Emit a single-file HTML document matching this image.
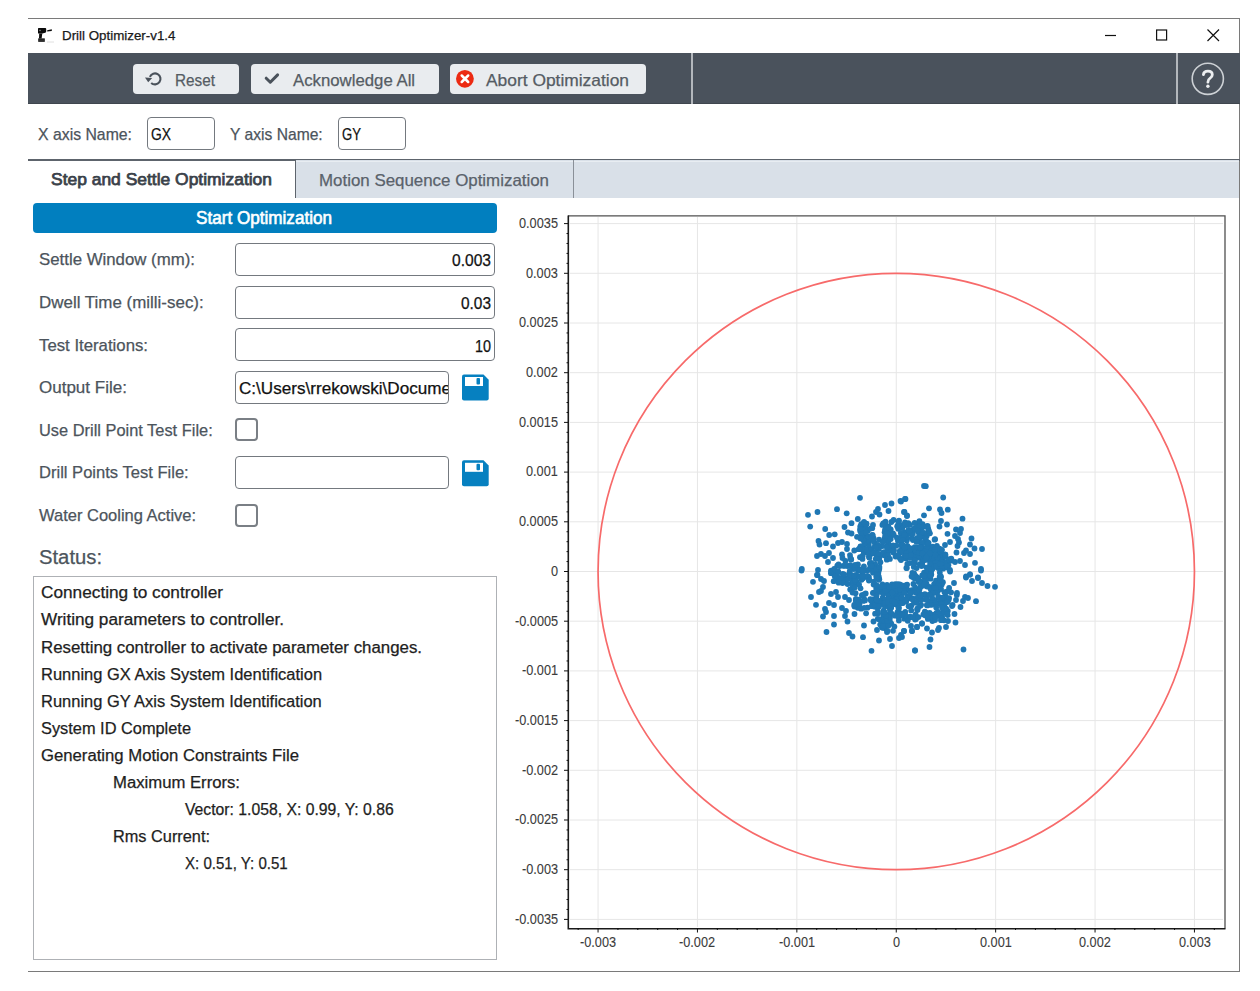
<!DOCTYPE html>
<html><head><meta charset="utf-8"><style>
html,body{margin:0;padding:0;width:1260px;height:991px;overflow:hidden;background:#fff;font-family:"Liberation Sans", sans-serif;}
.t{position:absolute;white-space:nowrap;line-height:0;transform-origin:0 0;-webkit-text-stroke:0.25px currentColor;}
.a{position:absolute;box-sizing:border-box;}
</style></head><body>
<!-- window frame -->
<div class="a" style="left:28px;top:18px;width:1212px;height:954px;border:1px solid #7a7a7a;border-left:none;"></div>
<!-- toolbar -->
<div class="a" style="left:28px;top:53px;width:1212px;height:51px;background:#4a525c;"></div>
<div class="a" style="left:28px;top:102.5px;width:1212px;height:1.5px;background:#3f464e;"></div>
<div class="a" style="left:690.5px;top:53px;width:2px;height:51px;background:#b3b7bc;"></div>
<div class="a" style="left:1176px;top:53px;width:2px;height:51px;background:#b3b7bc;"></div>
<div class="a" style="left:133px;top:64px;width:106px;height:30px;background:#e9ecef;border-radius:4px;"></div>
<div class="a" style="left:251px;top:64px;width:188px;height:30px;background:#e9ecef;border-radius:4px;"></div>
<div class="a" style="left:450px;top:64px;width:196px;height:30px;background:#e9ecef;border-radius:4px;"></div>
<!-- axis name inputs -->
<div class="a" style="left:147px;top:117px;width:68px;height:33px;border:1px solid #74797f;border-radius:4px;background:#fff;"></div>
<div class="a" style="left:338px;top:117px;width:68px;height:33px;border:1px solid #74797f;border-radius:4px;background:#fff;"></div>
<!-- tabs -->
<div class="a" style="left:28px;top:159px;width:1212px;height:1.5px;background:#5d646c;"></div>
<div class="a" style="left:296px;top:160px;width:943px;height:38px;background:#d9e0e8;"></div>
<div class="a" style="left:296px;top:160.5px;width:943px;height:1px;background:#e8edf2;"></div>
<div class="a" style="left:295px;top:160px;width:1.2px;height:38px;background:#5d646c;"></div>
<div class="a" style="left:573px;top:160px;width:1.2px;height:38px;background:#8a9098;"></div>
<!-- start button -->
<div class="a" style="left:32.5px;top:202.5px;width:464px;height:30px;background:#017fbf;border-radius:4px;"></div>
<!-- inputs -->
<div class="a" style="left:235px;top:242.5px;width:259.5px;height:33px;border:1px solid #74797f;border-radius:4px;"></div>
<div class="a" style="left:235px;top:285.5px;width:259.5px;height:33px;border:1px solid #74797f;border-radius:4px;"></div>
<div class="a" style="left:235px;top:328px;width:259.5px;height:33px;border:1px solid #74797f;border-radius:4px;"></div>
<div class="a" style="left:235px;top:370.5px;width:214px;height:33px;border:1px solid #74797f;border-radius:4px;overflow:hidden;">
  <div class="t" style="left:3px;top:16.58px;font-size:16.5px;color:#111;transform:scaleX(1.0369);">C:\Users\rrekowski\Documents\DrillOptimizer</div>
</div>
<div class="a" style="left:235px;top:418.3px;width:23px;height:23px;border:2px solid #7a7f85;border-radius:4px;"></div>
<div class="a" style="left:235px;top:456px;width:214px;height:33px;border:1px solid #74797f;border-radius:4px;"></div>
<div class="a" style="left:235px;top:503.8px;width:23px;height:23px;border:2px solid #7a7f85;border-radius:4px;"></div>
<!-- status box -->
<div class="a" style="left:33px;top:576px;width:464px;height:384px;border:1px solid #aeb1b5;"></div>
<svg class="a" style="left:0;top:0" width="1260" height="991">
  <!-- title icon -->
  <g fill="#0a0a0a">
    <path d="M38.6 28 L45.3 28 Q46.2 28 46.2 29 L46.2 31.6 Q46.2 32.4 45.2 32.8 L42.4 33.6 L38.6 33.6 Q38 33.6 38 33 L38 28.6 Q38 28 38.6 28 Z"/>
    <path d="M47.2 30.2 L51.8 29.2 L51.8 31 L47.2 31.6 Z"/>
    <path d="M39.2 33.4 L42.3 33.4 L41.6 38.4 L39 38.4 Z"/>
    <rect x="38.2" y="38.4" width="6.6" height="3.4"/>
  </g>
  <rect x="39.2" y="29.8" width="1.6" height="1.3" fill="#777"/>
  <rect x="38.2" y="39.7" width="6.6" height="0.7" fill="#666"/>
  <line x1="47" y1="42" x2="54" y2="42" stroke="#e0e0e0" stroke-width="1"/>
  <!-- window controls -->
  <line x1="1105" y1="35.5" x2="1116" y2="35.5" stroke="#111" stroke-width="1.2"/>
  <rect x="1156.6" y="30" width="10" height="10" fill="none" stroke="#111" stroke-width="1.2"/>
  <path d="M1207.5 29.5 L1219 41 M1219 29.5 L1207.5 41" stroke="#111" stroke-width="1.2"/>
  <!-- help -->
  <circle cx="1207.8" cy="78.8" r="15.6" fill="none" stroke="#cdd1d5" stroke-width="1.6"/>
  <path d="M1203.4 74.6 Q1203.8 71.2 1207.9 71.2 Q1212.3 71.2 1212.3 74.8 Q1212.3 77 1209.9 78.4 Q1207.9 79.6 1207.9 82.2" fill="none" stroke="#eceef0" stroke-width="2.8" stroke-linecap="round"/>
  <circle cx="1207.9" cy="86.2" r="1.7" fill="#eceef0"/>
  <!-- reset icon -->
  <path d="M151.2 82.9 A 5.5 5.5 0 1 0 149.9 76.8" fill="none" stroke="#4a525b" stroke-width="2.1"/>
  <path d="M145.0 77.6 L152.2 78.0 L148.2 82.3 Z" fill="#4a525b"/>
  <!-- check icon -->
  <path d="M266.2 78.2 L270.3 82.2 L277.6 74.9" fill="none" stroke="#4a525b" stroke-width="3" stroke-linecap="round" stroke-linejoin="round"/>
  <!-- red x -->
  <circle cx="464.9" cy="78.8" r="8.9" fill="#ec2a12"/>
  <path d="M461.7 75.5 L468.2 82 M468.2 75.5 L461.7 82" stroke="#fff" stroke-width="2.5" stroke-linecap="round"/>
  <!-- save icons -->
  <g id="sv">
    <path d="M462 376.5 Q462 374.5 464 374.5 L483.5 374.5 L488.7 379.7 L488.7 398.5 Q488.7 400.5 486.7 400.5 L464 400.5 Q462 400.5 462 398.5 Z" fill="#0680c0"/>
    <rect x="465" y="377" width="18" height="9" fill="#fff"/>
    <rect x="476.5" y="378" width="3.5" height="6.5" rx="1" fill="#0680c0"/>
  </g>
  <use href="#sv" x="0" y="85.8"/>
  <!-- chart grid -->
  <g stroke="#e6e6e6" stroke-width="1"><line x1="598.05" y1="217" x2="598.05" y2="927" /><line x1="697.45" y1="217" x2="697.45" y2="927" /><line x1="796.85" y1="217" x2="796.85" y2="927" /><line x1="896.25" y1="217" x2="896.25" y2="927" /><line x1="995.65" y1="217" x2="995.65" y2="927" /><line x1="1095.05" y1="217" x2="1095.05" y2="927" /><line x1="1194.45" y1="217" x2="1194.45" y2="927" /><line x1="570" y1="223.60" x2="1223" y2="223.60" /><line x1="570" y1="273.30" x2="1223" y2="273.30" /><line x1="570" y1="323.00" x2="1223" y2="323.00" /><line x1="570" y1="372.70" x2="1223" y2="372.70" /><line x1="570" y1="422.40" x2="1223" y2="422.40" /><line x1="570" y1="472.10" x2="1223" y2="472.10" /><line x1="570" y1="521.80" x2="1223" y2="521.80" /><line x1="570" y1="571.50" x2="1223" y2="571.50" /><line x1="570" y1="621.20" x2="1223" y2="621.20" /><line x1="570" y1="670.90" x2="1223" y2="670.90" /><line x1="570" y1="720.60" x2="1223" y2="720.60" /><line x1="570" y1="770.30" x2="1223" y2="770.30" /><line x1="570" y1="820.00" x2="1223" y2="820.00" /><line x1="570" y1="869.70" x2="1223" y2="869.70" /><line x1="570" y1="919.40" x2="1223" y2="919.40" /></g>
  <!-- circle -->
  <circle cx="896.25" cy="571.5" r="298.20" fill="none" stroke="#f76a6a" stroke-width="1.7"/>
  <!-- scatter -->
  <g fill="#1f77b4"><circle cx="906.5" cy="589.5" r="2.9"/><circle cx="936.9" cy="545.9" r="2.9"/><circle cx="889.1" cy="614.5" r="2.9"/><circle cx="889.9" cy="591.0" r="2.9"/><circle cx="940.8" cy="577.3" r="2.9"/><circle cx="924.4" cy="594.9" r="2.9"/><circle cx="904.8" cy="550.9" r="2.9"/><circle cx="889.5" cy="600.5" r="2.9"/><circle cx="942.2" cy="600.0" r="2.9"/><circle cx="947.7" cy="562.0" r="2.9"/><circle cx="932.1" cy="567.9" r="2.9"/><circle cx="884.7" cy="589.6" r="2.9"/><circle cx="873.6" cy="584.6" r="2.9"/><circle cx="945.5" cy="596.2" r="2.9"/><circle cx="956.8" cy="594.9" r="2.9"/><circle cx="902.0" cy="599.9" r="2.9"/><circle cx="902.6" cy="548.9" r="2.9"/><circle cx="932.1" cy="563.8" r="2.9"/><circle cx="927.9" cy="618.9" r="2.9"/><circle cx="881.0" cy="587.6" r="2.9"/><circle cx="940.8" cy="552.3" r="2.9"/><circle cx="877.1" cy="569.8" r="2.9"/><circle cx="895.6" cy="591.6" r="2.9"/><circle cx="921.6" cy="543.3" r="2.9"/><circle cx="908.1" cy="590.2" r="2.9"/><circle cx="888.6" cy="595.8" r="2.9"/><circle cx="873.8" cy="599.1" r="2.9"/><circle cx="860.6" cy="569.3" r="2.9"/><circle cx="905.0" cy="553.1" r="2.9"/><circle cx="875.3" cy="552.2" r="2.9"/><circle cx="877.0" cy="606.9" r="2.9"/><circle cx="923.6" cy="551.9" r="2.9"/><circle cx="852.4" cy="566.8" r="2.9"/><circle cx="918.7" cy="527.1" r="2.9"/><circle cx="869.9" cy="554.7" r="2.9"/><circle cx="885.0" cy="616.8" r="2.9"/><circle cx="850.0" cy="555.1" r="2.9"/><circle cx="943.0" cy="568.7" r="2.9"/><circle cx="896.9" cy="537.7" r="2.9"/><circle cx="932.9" cy="614.8" r="2.9"/><circle cx="932.9" cy="591.4" r="2.9"/><circle cx="932.8" cy="556.1" r="2.9"/><circle cx="931.2" cy="547.3" r="2.9"/><circle cx="873.0" cy="564.6" r="2.9"/><circle cx="884.5" cy="628.1" r="2.9"/><circle cx="924.9" cy="614.6" r="2.9"/><circle cx="914.2" cy="576.8" r="2.9"/><circle cx="945.5" cy="597.6" r="2.9"/><circle cx="914.2" cy="577.5" r="2.9"/><circle cx="881.8" cy="626.7" r="2.9"/><circle cx="907.6" cy="555.6" r="2.9"/><circle cx="890.0" cy="608.1" r="2.9"/><circle cx="873.7" cy="538.5" r="2.9"/><circle cx="897.5" cy="612.2" r="2.9"/><circle cx="947.8" cy="610.9" r="2.9"/><circle cx="909.7" cy="617.6" r="2.9"/><circle cx="862.9" cy="577.7" r="2.9"/><circle cx="889.5" cy="607.4" r="2.9"/><circle cx="893.3" cy="552.6" r="2.9"/><circle cx="868.9" cy="556.8" r="2.9"/><circle cx="904.3" cy="557.9" r="2.9"/><circle cx="900.2" cy="600.2" r="2.9"/><circle cx="851.2" cy="559.4" r="2.9"/><circle cx="929.7" cy="560.3" r="2.9"/><circle cx="932.2" cy="589.1" r="2.9"/><circle cx="892.5" cy="598.6" r="2.9"/><circle cx="882.7" cy="597.6" r="2.9"/><circle cx="887.9" cy="544.2" r="2.9"/><circle cx="897.7" cy="597.7" r="2.9"/><circle cx="837.3" cy="565.6" r="2.9"/><circle cx="883.4" cy="619.7" r="2.9"/><circle cx="949.7" cy="559.5" r="2.9"/><circle cx="944.7" cy="609.1" r="2.9"/><circle cx="862.1" cy="570.2" r="2.9"/><circle cx="931.0" cy="594.4" r="2.9"/><circle cx="923.4" cy="582.1" r="2.9"/><circle cx="915.6" cy="614.5" r="2.9"/><circle cx="927.8" cy="575.8" r="2.9"/><circle cx="921.0" cy="527.7" r="2.9"/><circle cx="901.3" cy="613.5" r="2.9"/><circle cx="860.5" cy="588.3" r="2.9"/><circle cx="879.2" cy="558.7" r="2.9"/><circle cx="879.6" cy="556.7" r="2.9"/><circle cx="882.4" cy="524.9" r="2.9"/><circle cx="893.0" cy="630.8" r="2.9"/><circle cx="881.7" cy="603.9" r="2.9"/><circle cx="926.3" cy="595.2" r="2.9"/><circle cx="921.5" cy="537.1" r="2.9"/><circle cx="862.8" cy="538.7" r="2.9"/><circle cx="868.9" cy="542.6" r="2.9"/><circle cx="919.7" cy="564.2" r="2.9"/><circle cx="939.0" cy="584.6" r="2.9"/><circle cx="850.4" cy="557.9" r="2.9"/><circle cx="928.6" cy="532.1" r="2.9"/><circle cx="936.5" cy="612.8" r="2.9"/><circle cx="880.0" cy="602.3" r="2.9"/><circle cx="921.3" cy="595.4" r="2.9"/><circle cx="940.5" cy="552.3" r="2.9"/><circle cx="883.0" cy="601.7" r="2.9"/><circle cx="936.4" cy="549.7" r="2.9"/><circle cx="874.4" cy="584.1" r="2.9"/><circle cx="855.3" cy="584.6" r="2.9"/><circle cx="878.8" cy="579.8" r="2.9"/><circle cx="914.5" cy="528.4" r="2.9"/><circle cx="876.6" cy="606.9" r="2.9"/><circle cx="926.5" cy="550.2" r="2.9"/><circle cx="915.9" cy="592.8" r="2.9"/><circle cx="932.8" cy="546.6" r="2.9"/><circle cx="915.5" cy="578.8" r="2.9"/><circle cx="842.7" cy="573.8" r="2.9"/><circle cx="873.8" cy="600.5" r="2.9"/><circle cx="901.6" cy="536.7" r="2.9"/><circle cx="911.9" cy="590.1" r="2.9"/><circle cx="913.2" cy="529.7" r="2.9"/><circle cx="871.1" cy="600.7" r="2.9"/><circle cx="900.1" cy="592.1" r="2.9"/><circle cx="887.5" cy="552.2" r="2.9"/><circle cx="921.1" cy="604.8" r="2.9"/><circle cx="898.6" cy="603.0" r="2.9"/><circle cx="874.7" cy="546.6" r="2.9"/><circle cx="877.8" cy="618.8" r="2.9"/><circle cx="928.0" cy="557.1" r="2.9"/><circle cx="871.3" cy="563.0" r="2.9"/><circle cx="898.4" cy="606.8" r="2.9"/><circle cx="929.3" cy="601.5" r="2.9"/><circle cx="882.2" cy="603.5" r="2.9"/><circle cx="934.0" cy="604.1" r="2.9"/><circle cx="904.9" cy="532.4" r="2.9"/><circle cx="932.4" cy="621.1" r="2.9"/><circle cx="951.4" cy="560.6" r="2.9"/><circle cx="899.8" cy="584.4" r="2.9"/><circle cx="917.3" cy="550.6" r="2.9"/><circle cx="939.8" cy="572.6" r="2.9"/><circle cx="906.2" cy="601.5" r="2.9"/><circle cx="914.1" cy="573.5" r="2.9"/><circle cx="893.1" cy="591.9" r="2.9"/><circle cx="874.8" cy="542.8" r="2.9"/><circle cx="838.1" cy="579.1" r="2.9"/><circle cx="918.3" cy="531.0" r="2.9"/><circle cx="939.6" cy="586.5" r="2.9"/><circle cx="948.5" cy="600.2" r="2.9"/><circle cx="924.2" cy="555.9" r="2.9"/><circle cx="940.0" cy="567.0" r="2.9"/><circle cx="926.4" cy="572.7" r="2.9"/><circle cx="848.9" cy="574.2" r="2.9"/><circle cx="912.4" cy="551.3" r="2.9"/><circle cx="888.4" cy="605.1" r="2.9"/><circle cx="944.9" cy="600.6" r="2.9"/><circle cx="875.7" cy="559.1" r="2.9"/><circle cx="896.8" cy="586.0" r="2.9"/><circle cx="887.8" cy="538.2" r="2.9"/><circle cx="849.9" cy="573.3" r="2.9"/><circle cx="919.4" cy="521.1" r="2.9"/><circle cx="880.4" cy="562.2" r="2.9"/><circle cx="889.7" cy="534.6" r="2.9"/><circle cx="908.9" cy="556.2" r="2.9"/><circle cx="922.6" cy="547.7" r="2.9"/><circle cx="930.4" cy="570.4" r="2.9"/><circle cx="860.5" cy="546.6" r="2.9"/><circle cx="909.8" cy="556.0" r="2.9"/><circle cx="890.0" cy="610.6" r="2.9"/><circle cx="878.7" cy="554.8" r="2.9"/><circle cx="923.4" cy="614.4" r="2.9"/><circle cx="875.2" cy="564.4" r="2.9"/><circle cx="857.8" cy="607.8" r="2.9"/><circle cx="863.0" cy="535.2" r="2.9"/><circle cx="906.7" cy="599.6" r="2.9"/><circle cx="878.3" cy="573.0" r="2.9"/><circle cx="831.0" cy="570.6" r="2.9"/><circle cx="926.6" cy="595.6" r="2.9"/><circle cx="937.7" cy="591.4" r="2.9"/><circle cx="942.2" cy="618.8" r="2.9"/><circle cx="886.5" cy="621.7" r="2.9"/><circle cx="923.3" cy="554.7" r="2.9"/><circle cx="856.6" cy="581.9" r="2.9"/><circle cx="929.5" cy="586.9" r="2.9"/><circle cx="930.5" cy="578.7" r="2.9"/><circle cx="888.5" cy="541.5" r="2.9"/><circle cx="935.8" cy="588.2" r="2.9"/><circle cx="911.4" cy="605.6" r="2.9"/><circle cx="941.3" cy="556.2" r="2.9"/><circle cx="906.4" cy="568.0" r="2.9"/><circle cx="905.3" cy="612.0" r="2.9"/><circle cx="854.8" cy="579.2" r="2.9"/><circle cx="922.6" cy="524.2" r="2.9"/><circle cx="873.0" cy="572.7" r="2.9"/><circle cx="837.3" cy="580.8" r="2.9"/><circle cx="883.0" cy="592.2" r="2.9"/><circle cx="906.8" cy="540.5" r="2.9"/><circle cx="871.6" cy="566.3" r="2.9"/><circle cx="882.4" cy="627.8" r="2.9"/><circle cx="890.9" cy="607.0" r="2.9"/><circle cx="866.3" cy="576.8" r="2.9"/><circle cx="863.9" cy="566.5" r="2.9"/><circle cx="872.8" cy="603.3" r="2.9"/><circle cx="865.3" cy="527.3" r="2.9"/><circle cx="868.6" cy="570.1" r="2.9"/><circle cx="888.2" cy="620.5" r="2.9"/><circle cx="932.9" cy="550.4" r="2.9"/><circle cx="845.1" cy="578.2" r="2.9"/><circle cx="854.5" cy="606.6" r="2.9"/><circle cx="884.2" cy="555.3" r="2.9"/><circle cx="868.5" cy="544.4" r="2.9"/><circle cx="882.4" cy="546.0" r="2.9"/><circle cx="909.6" cy="595.4" r="2.9"/><circle cx="946.6" cy="611.2" r="2.9"/><circle cx="860.2" cy="531.1" r="2.9"/><circle cx="930.6" cy="575.6" r="2.9"/><circle cx="936.0" cy="580.7" r="2.9"/><circle cx="933.8" cy="586.7" r="2.9"/><circle cx="873.7" cy="569.1" r="2.9"/><circle cx="932.4" cy="568.8" r="2.9"/><circle cx="868.9" cy="577.1" r="2.9"/><circle cx="938.6" cy="613.5" r="2.9"/><circle cx="949.1" cy="587.9" r="2.9"/><circle cx="864.4" cy="599.4" r="2.9"/><circle cx="876.3" cy="576.3" r="2.9"/><circle cx="911.7" cy="538.2" r="2.9"/><circle cx="877.8" cy="613.6" r="2.9"/><circle cx="869.1" cy="547.2" r="2.9"/><circle cx="879.0" cy="548.6" r="2.9"/><circle cx="838.3" cy="577.6" r="2.9"/><circle cx="937.0" cy="590.1" r="2.9"/><circle cx="890.8" cy="546.9" r="2.9"/><circle cx="899.0" cy="520.6" r="2.9"/><circle cx="915.7" cy="592.0" r="2.9"/><circle cx="926.7" cy="536.0" r="2.9"/><circle cx="860.0" cy="557.2" r="2.9"/><circle cx="891.1" cy="598.7" r="2.9"/><circle cx="872.9" cy="604.0" r="2.9"/><circle cx="897.5" cy="614.1" r="2.9"/><circle cx="854.1" cy="585.7" r="2.9"/><circle cx="917.1" cy="577.5" r="2.9"/><circle cx="927.6" cy="526.0" r="2.9"/><circle cx="869.4" cy="557.7" r="2.9"/><circle cx="940.1" cy="614.4" r="2.9"/><circle cx="863.1" cy="529.7" r="2.9"/><circle cx="923.2" cy="555.6" r="2.9"/><circle cx="911.9" cy="548.6" r="2.9"/><circle cx="908.3" cy="523.2" r="2.9"/><circle cx="883.3" cy="615.9" r="2.9"/><circle cx="939.1" cy="560.7" r="2.9"/><circle cx="855.9" cy="580.3" r="2.9"/><circle cx="884.0" cy="618.2" r="2.9"/><circle cx="920.5" cy="558.0" r="2.9"/><circle cx="876.4" cy="592.6" r="2.9"/><circle cx="941.8" cy="584.5" r="2.9"/><circle cx="876.2" cy="588.1" r="2.9"/><circle cx="897.5" cy="602.8" r="2.9"/><circle cx="935.7" cy="614.7" r="2.9"/><circle cx="946.7" cy="567.5" r="2.9"/><circle cx="916.7" cy="529.4" r="2.9"/><circle cx="942.4" cy="560.0" r="2.9"/><circle cx="889.8" cy="620.9" r="2.9"/><circle cx="865.3" cy="537.6" r="2.9"/><circle cx="905.9" cy="525.1" r="2.9"/><circle cx="878.5" cy="575.9" r="2.9"/><circle cx="884.2" cy="589.8" r="2.9"/><circle cx="913.8" cy="566.9" r="2.9"/><circle cx="917.9" cy="524.9" r="2.9"/><circle cx="885.4" cy="604.7" r="2.9"/><circle cx="882.9" cy="621.4" r="2.9"/><circle cx="935.4" cy="554.5" r="2.9"/><circle cx="882.4" cy="584.4" r="2.9"/><circle cx="902.6" cy="525.1" r="2.9"/><circle cx="858.2" cy="570.8" r="2.9"/><circle cx="939.5" cy="579.1" r="2.9"/><circle cx="914.0" cy="577.9" r="2.9"/><circle cx="854.3" cy="550.5" r="2.9"/><circle cx="845.3" cy="578.3" r="2.9"/><circle cx="874.1" cy="606.5" r="2.9"/><circle cx="939.5" cy="602.8" r="2.9"/><circle cx="884.3" cy="552.1" r="2.9"/><circle cx="946.8" cy="562.3" r="2.9"/><circle cx="938.7" cy="614.1" r="2.9"/><circle cx="860.6" cy="546.3" r="2.9"/><circle cx="872.2" cy="528.2" r="2.9"/><circle cx="856.7" cy="567.6" r="2.9"/><circle cx="901.4" cy="544.2" r="2.9"/><circle cx="919.0" cy="540.6" r="2.9"/><circle cx="915.2" cy="587.5" r="2.9"/><circle cx="879.3" cy="579.2" r="2.9"/><circle cx="905.7" cy="589.7" r="2.9"/><circle cx="885.5" cy="521.7" r="2.9"/><circle cx="930.3" cy="617.3" r="2.9"/><circle cx="917.1" cy="541.4" r="2.9"/><circle cx="890.8" cy="536.3" r="2.9"/><circle cx="921.2" cy="555.3" r="2.9"/><circle cx="923.2" cy="584.4" r="2.9"/><circle cx="842.0" cy="577.8" r="2.9"/><circle cx="940.2" cy="568.2" r="2.9"/><circle cx="892.0" cy="584.4" r="2.9"/><circle cx="935.1" cy="539.2" r="2.9"/><circle cx="899.8" cy="551.0" r="2.9"/><circle cx="944.0" cy="620.3" r="2.9"/><circle cx="936.7" cy="604.0" r="2.9"/><circle cx="916.2" cy="602.5" r="2.9"/><circle cx="873.6" cy="572.0" r="2.9"/><circle cx="901.7" cy="544.7" r="2.9"/><circle cx="918.7" cy="581.9" r="2.9"/><circle cx="900.0" cy="553.0" r="2.9"/><circle cx="922.2" cy="535.5" r="2.9"/><circle cx="890.7" cy="539.0" r="2.9"/><circle cx="893.7" cy="534.9" r="2.9"/><circle cx="841.1" cy="579.0" r="2.9"/><circle cx="940.9" cy="576.3" r="2.9"/><circle cx="863.9" cy="552.4" r="2.9"/><circle cx="852.2" cy="583.0" r="2.9"/><circle cx="925.6" cy="541.8" r="2.9"/><circle cx="887.4" cy="631.0" r="2.9"/><circle cx="914.7" cy="547.1" r="2.9"/><circle cx="941.1" cy="603.6" r="2.9"/><circle cx="893.5" cy="596.8" r="2.9"/><circle cx="883.6" cy="610.7" r="2.9"/><circle cx="861.5" cy="579.8" r="2.9"/><circle cx="855.5" cy="605.2" r="2.9"/><circle cx="922.6" cy="559.3" r="2.9"/><circle cx="833.7" cy="581.2" r="2.9"/><circle cx="924.1" cy="572.7" r="2.9"/><circle cx="924.0" cy="532.8" r="2.9"/><circle cx="898.7" cy="594.6" r="2.9"/><circle cx="906.5" cy="534.2" r="2.9"/><circle cx="930.1" cy="561.5" r="2.9"/><circle cx="907.4" cy="546.3" r="2.9"/><circle cx="932.3" cy="561.2" r="2.9"/><circle cx="932.7" cy="568.0" r="2.9"/><circle cx="914.8" cy="553.9" r="2.9"/><circle cx="857.2" cy="568.8" r="2.9"/><circle cx="932.0" cy="556.1" r="2.9"/><circle cx="857.9" cy="564.5" r="2.9"/><circle cx="905.7" cy="549.5" r="2.9"/><circle cx="872.1" cy="538.4" r="2.9"/><circle cx="902.0" cy="546.6" r="2.9"/><circle cx="927.0" cy="586.6" r="2.9"/><circle cx="914.1" cy="602.5" r="2.9"/><circle cx="931.3" cy="574.5" r="2.9"/><circle cx="903.7" cy="589.2" r="2.9"/><circle cx="885.0" cy="530.0" r="2.9"/><circle cx="843.9" cy="574.4" r="2.9"/><circle cx="915.8" cy="551.3" r="2.9"/><circle cx="889.4" cy="550.8" r="2.9"/><circle cx="867.7" cy="530.8" r="2.9"/><circle cx="924.8" cy="578.2" r="2.9"/><circle cx="928.0" cy="575.5" r="2.9"/><circle cx="910.0" cy="524.8" r="2.9"/><circle cx="915.6" cy="576.0" r="2.9"/><circle cx="948.4" cy="565.2" r="2.9"/><circle cx="920.4" cy="581.7" r="2.9"/><circle cx="878.8" cy="570.4" r="2.9"/><circle cx="889.5" cy="545.6" r="2.9"/><circle cx="874.5" cy="592.4" r="2.9"/><circle cx="859.1" cy="584.6" r="2.9"/><circle cx="893.2" cy="545.4" r="2.9"/><circle cx="942.9" cy="582.2" r="2.9"/><circle cx="872.2" cy="566.3" r="2.9"/><circle cx="925.6" cy="558.3" r="2.9"/><circle cx="922.3" cy="547.4" r="2.9"/><circle cx="853.6" cy="587.1" r="2.9"/><circle cx="922.6" cy="527.3" r="2.9"/><circle cx="927.6" cy="571.9" r="2.9"/><circle cx="877.2" cy="574.9" r="2.9"/><circle cx="884.3" cy="538.8" r="2.9"/><circle cx="879.4" cy="591.9" r="2.9"/><circle cx="932.0" cy="599.8" r="2.9"/><circle cx="884.6" cy="532.3" r="2.9"/><circle cx="882.9" cy="552.6" r="2.9"/><circle cx="885.6" cy="625.5" r="2.9"/><circle cx="864.6" cy="525.2" r="2.9"/><circle cx="945.1" cy="554.6" r="2.9"/><circle cx="867.4" cy="540.7" r="2.9"/><circle cx="894.0" cy="550.5" r="2.9"/><circle cx="925.9" cy="612.6" r="2.9"/><circle cx="843.1" cy="565.8" r="2.9"/><circle cx="862.5" cy="549.3" r="2.9"/><circle cx="944.8" cy="562.4" r="2.9"/><circle cx="872.9" cy="592.9" r="2.9"/><circle cx="860.6" cy="529.8" r="2.9"/><circle cx="872.7" cy="535.2" r="2.9"/><circle cx="870.6" cy="528.5" r="2.9"/><circle cx="869.2" cy="579.6" r="2.9"/><circle cx="871.4" cy="549.6" r="2.9"/><circle cx="891.2" cy="607.7" r="2.9"/><circle cx="884.9" cy="606.4" r="2.9"/><circle cx="890.7" cy="529.3" r="2.9"/><circle cx="895.0" cy="615.7" r="2.9"/><circle cx="876.8" cy="558.0" r="2.9"/><circle cx="889.4" cy="600.1" r="2.9"/><circle cx="861.9" cy="524.3" r="2.9"/><circle cx="937.1" cy="615.6" r="2.9"/><circle cx="886.7" cy="603.5" r="2.9"/><circle cx="916.0" cy="619.1" r="2.9"/><circle cx="899.3" cy="524.6" r="2.9"/><circle cx="894.4" cy="626.6" r="2.9"/><circle cx="855.9" cy="598.9" r="2.9"/><circle cx="908.6" cy="606.2" r="2.9"/><circle cx="852.9" cy="578.8" r="2.9"/><circle cx="938.1" cy="568.0" r="2.9"/><circle cx="895.9" cy="594.7" r="2.9"/><circle cx="932.0" cy="617.3" r="2.9"/><circle cx="944.9" cy="567.1" r="2.9"/><circle cx="878.7" cy="576.9" r="2.9"/><circle cx="918.8" cy="552.9" r="2.9"/><circle cx="871.7" cy="606.2" r="2.9"/><circle cx="866.5" cy="523.8" r="2.9"/><circle cx="922.9" cy="585.7" r="2.9"/><circle cx="884.0" cy="540.8" r="2.9"/><circle cx="906.1" cy="558.4" r="2.9"/><circle cx="951.1" cy="592.3" r="2.9"/><circle cx="887.6" cy="593.6" r="2.9"/><circle cx="906.2" cy="588.5" r="2.9"/><circle cx="891.9" cy="613.9" r="2.9"/><circle cx="837.5" cy="572.7" r="2.9"/><circle cx="885.6" cy="599.7" r="2.9"/><circle cx="845.3" cy="581.8" r="2.9"/><circle cx="865.7" cy="593.5" r="2.9"/><circle cx="869.5" cy="549.9" r="2.9"/><circle cx="939.7" cy="576.7" r="2.9"/><circle cx="899.9" cy="558.3" r="2.9"/><circle cx="897.8" cy="556.3" r="2.9"/><circle cx="938.7" cy="584.1" r="2.9"/><circle cx="859.0" cy="599.6" r="2.9"/><circle cx="934.4" cy="583.9" r="2.9"/><circle cx="847.4" cy="566.0" r="2.9"/><circle cx="919.3" cy="521.9" r="2.9"/><circle cx="947.7" cy="615.1" r="2.9"/><circle cx="949.1" cy="598.1" r="2.9"/><circle cx="879.5" cy="619.4" r="2.9"/><circle cx="926.8" cy="596.7" r="2.9"/><circle cx="862.5" cy="558.9" r="2.9"/><circle cx="915.1" cy="619.6" r="2.9"/><circle cx="918.5" cy="557.4" r="2.9"/><circle cx="894.0" cy="604.1" r="2.9"/><circle cx="933.9" cy="559.0" r="2.9"/><circle cx="912.3" cy="572.8" r="2.9"/><circle cx="853.4" cy="582.9" r="2.9"/><circle cx="904.3" cy="618.7" r="2.9"/><circle cx="935.6" cy="614.2" r="2.9"/><circle cx="879.0" cy="539.6" r="2.9"/><circle cx="912.9" cy="540.1" r="2.9"/><circle cx="926.4" cy="583.3" r="2.9"/><circle cx="935.4" cy="557.4" r="2.9"/><circle cx="914.1" cy="560.0" r="2.9"/><circle cx="911.6" cy="576.5" r="2.9"/><circle cx="943.1" cy="605.3" r="2.9"/><circle cx="864.2" cy="538.1" r="2.9"/><circle cx="934.9" cy="592.7" r="2.9"/><circle cx="855.8" cy="600.7" r="2.9"/><circle cx="876.5" cy="585.1" r="2.9"/><circle cx="886.3" cy="592.2" r="2.9"/><circle cx="842.5" cy="583.0" r="2.9"/><circle cx="913.4" cy="584.0" r="2.9"/><circle cx="931.0" cy="589.2" r="2.9"/><circle cx="904.0" cy="552.0" r="2.9"/><circle cx="908.5" cy="529.9" r="2.9"/><circle cx="896.3" cy="545.7" r="2.9"/><circle cx="889.5" cy="604.8" r="2.9"/><circle cx="878.0" cy="577.3" r="2.9"/><circle cx="927.3" cy="605.4" r="2.9"/><circle cx="891.4" cy="522.0" r="2.9"/><circle cx="882.8" cy="620.6" r="2.9"/><circle cx="909.2" cy="552.4" r="2.9"/><circle cx="933.9" cy="557.3" r="2.9"/><circle cx="944.6" cy="562.7" r="2.9"/><circle cx="928.2" cy="528.7" r="2.9"/><circle cx="898.7" cy="617.2" r="2.9"/><circle cx="904.7" cy="556.4" r="2.9"/><circle cx="926.5" cy="613.2" r="2.9"/><circle cx="903.3" cy="589.6" r="2.9"/><circle cx="869.9" cy="563.5" r="2.9"/><circle cx="887.2" cy="621.9" r="2.9"/><circle cx="934.6" cy="539.7" r="2.9"/><circle cx="930.1" cy="564.4" r="2.9"/><circle cx="919.4" cy="581.8" r="2.9"/><circle cx="885.8" cy="525.4" r="2.9"/><circle cx="893.0" cy="533.3" r="2.9"/><circle cx="941.0" cy="589.0" r="2.9"/><circle cx="934.9" cy="557.2" r="2.9"/><circle cx="942.1" cy="616.9" r="2.9"/><circle cx="936.9" cy="581.0" r="2.9"/><circle cx="941.8" cy="598.0" r="2.9"/><circle cx="860.5" cy="569.8" r="2.9"/><circle cx="902.9" cy="603.1" r="2.9"/><circle cx="862.8" cy="529.9" r="2.9"/><circle cx="943.7" cy="610.0" r="2.9"/><circle cx="881.1" cy="586.7" r="2.9"/><circle cx="882.5" cy="603.6" r="2.9"/><circle cx="889.1" cy="598.2" r="2.9"/><circle cx="905.0" cy="522.4" r="2.9"/><circle cx="910.1" cy="616.6" r="2.9"/><circle cx="934.9" cy="600.1" r="2.9"/><circle cx="878.0" cy="545.0" r="2.9"/><circle cx="924.2" cy="553.1" r="2.9"/><circle cx="909.6" cy="533.5" r="2.9"/><circle cx="896.4" cy="604.6" r="2.9"/><circle cx="916.7" cy="538.2" r="2.9"/><circle cx="895.3" cy="584.1" r="2.9"/><circle cx="888.3" cy="593.5" r="2.9"/><circle cx="946.2" cy="609.6" r="2.9"/><circle cx="919.4" cy="589.7" r="2.9"/><circle cx="876.4" cy="599.0" r="2.9"/><circle cx="930.7" cy="551.1" r="2.9"/><circle cx="920.5" cy="587.0" r="2.9"/><circle cx="907.3" cy="545.9" r="2.9"/><circle cx="888.4" cy="526.5" r="2.9"/><circle cx="877.3" cy="574.0" r="2.9"/><circle cx="920.4" cy="550.5" r="2.9"/><circle cx="923.8" cy="584.5" r="2.9"/><circle cx="905.0" cy="537.3" r="2.9"/><circle cx="833.5" cy="571.9" r="2.9"/><circle cx="895.6" cy="587.9" r="2.9"/><circle cx="929.9" cy="533.3" r="2.9"/><circle cx="851.0" cy="559.4" r="2.9"/><circle cx="873.8" cy="592.8" r="2.9"/><circle cx="931.1" cy="589.8" r="2.9"/><circle cx="909.3" cy="551.8" r="2.9"/><circle cx="911.3" cy="592.2" r="2.9"/><circle cx="925.7" cy="539.3" r="2.9"/><circle cx="934.3" cy="584.1" r="2.9"/><circle cx="926.5" cy="526.3" r="2.9"/><circle cx="870.0" cy="568.1" r="2.9"/><circle cx="889.9" cy="617.6" r="2.9"/><circle cx="936.7" cy="552.6" r="2.9"/><circle cx="944.0" cy="612.8" r="2.9"/><circle cx="876.5" cy="554.6" r="2.9"/><circle cx="885.5" cy="555.7" r="2.9"/><circle cx="900.1" cy="589.3" r="2.9"/><circle cx="901.3" cy="544.9" r="2.9"/><circle cx="850.2" cy="589.5" r="2.9"/><circle cx="902.4" cy="528.1" r="2.9"/><circle cx="931.0" cy="604.9" r="2.9"/><circle cx="834.2" cy="569.0" r="2.9"/><circle cx="945.2" cy="554.6" r="2.9"/><circle cx="867.4" cy="607.7" r="2.9"/><circle cx="939.6" cy="599.1" r="2.9"/><circle cx="901.6" cy="551.3" r="2.9"/><circle cx="915.9" cy="555.4" r="2.9"/><circle cx="936.4" cy="547.6" r="2.9"/><circle cx="885.7" cy="530.3" r="2.9"/><circle cx="897.9" cy="540.8" r="2.9"/><circle cx="868.4" cy="553.3" r="2.9"/><circle cx="838.5" cy="564.5" r="2.9"/><circle cx="939.1" cy="583.1" r="2.9"/><circle cx="939.6" cy="548.6" r="2.9"/><circle cx="906.2" cy="616.3" r="2.9"/><circle cx="886.9" cy="547.5" r="2.9"/><circle cx="909.0" cy="598.3" r="2.9"/><circle cx="877.0" cy="575.2" r="2.9"/><circle cx="945.6" cy="556.9" r="2.9"/><circle cx="927.5" cy="543.6" r="2.9"/><circle cx="873.1" cy="540.3" r="2.9"/><circle cx="859.4" cy="604.2" r="2.9"/><circle cx="907.7" cy="596.5" r="2.9"/><circle cx="888.1" cy="555.7" r="2.9"/><circle cx="952.6" cy="605.0" r="2.9"/><circle cx="903.0" cy="545.3" r="2.9"/><circle cx="927.0" cy="577.9" r="2.9"/><circle cx="866.1" cy="613.3" r="2.9"/><circle cx="912.8" cy="533.4" r="2.9"/><circle cx="876.5" cy="590.9" r="2.9"/><circle cx="830.9" cy="573.2" r="2.9"/><circle cx="883.3" cy="593.7" r="2.9"/><circle cx="935.4" cy="562.2" r="2.9"/><circle cx="906.4" cy="547.4" r="2.9"/><circle cx="887.1" cy="590.6" r="2.9"/><circle cx="834.8" cy="576.2" r="2.9"/><circle cx="935.1" cy="556.6" r="2.9"/><circle cx="873.6" cy="553.4" r="2.9"/><circle cx="856.2" cy="575.0" r="2.9"/><circle cx="918.5" cy="556.1" r="2.9"/><circle cx="946.1" cy="608.6" r="2.9"/><circle cx="900.2" cy="595.4" r="2.9"/><circle cx="912.9" cy="617.2" r="2.9"/><circle cx="939.3" cy="551.2" r="2.9"/><circle cx="855.0" cy="580.0" r="2.9"/><circle cx="938.3" cy="596.7" r="2.9"/><circle cx="897.6" cy="597.7" r="2.9"/><circle cx="909.3" cy="548.0" r="2.9"/><circle cx="852.8" cy="586.4" r="2.9"/><circle cx="918.6" cy="526.6" r="2.9"/><circle cx="941.8" cy="566.1" r="2.9"/><circle cx="885.2" cy="602.9" r="2.9"/><circle cx="906.8" cy="567.9" r="2.9"/><circle cx="866.1" cy="570.4" r="2.9"/><circle cx="876.6" cy="578.1" r="2.9"/><circle cx="904.4" cy="600.4" r="2.9"/><circle cx="938.2" cy="551.9" r="2.9"/><circle cx="909.3" cy="551.1" r="2.9"/><circle cx="925.4" cy="559.8" r="2.9"/><circle cx="906.3" cy="553.2" r="2.9"/><circle cx="936.2" cy="607.5" r="2.9"/><circle cx="854.2" cy="605.0" r="2.9"/><circle cx="929.5" cy="550.4" r="2.9"/><circle cx="930.3" cy="575.5" r="2.9"/><circle cx="889.4" cy="529.8" r="2.9"/><circle cx="912.8" cy="598.4" r="2.9"/><circle cx="944.5" cy="604.2" r="2.9"/><circle cx="845.4" cy="560.9" r="2.9"/><circle cx="920.4" cy="605.8" r="2.9"/><circle cx="946.9" cy="566.1" r="2.9"/><circle cx="904.7" cy="547.8" r="2.9"/><circle cx="860.3" cy="526.3" r="2.9"/><circle cx="895.1" cy="585.3" r="2.9"/><circle cx="861.2" cy="524.1" r="2.9"/><circle cx="910.2" cy="593.1" r="2.9"/><circle cx="945.4" cy="554.6" r="2.9"/><circle cx="909.7" cy="563.1" r="2.9"/><circle cx="924.9" cy="550.9" r="2.9"/><circle cx="864.1" cy="544.7" r="2.9"/><circle cx="887.3" cy="533.5" r="2.9"/><circle cx="905.0" cy="615.3" r="2.9"/><circle cx="911.2" cy="610.4" r="2.9"/><circle cx="922.2" cy="575.4" r="2.9"/><circle cx="898.2" cy="528.8" r="2.9"/><circle cx="854.7" cy="587.6" r="2.9"/><circle cx="912.5" cy="556.7" r="2.9"/><circle cx="858.9" cy="602.2" r="2.9"/><circle cx="942.1" cy="562.7" r="2.9"/><circle cx="924.8" cy="611.6" r="2.9"/><circle cx="876.8" cy="604.9" r="2.9"/><circle cx="914.6" cy="563.1" r="2.9"/><circle cx="925.7" cy="579.9" r="2.9"/><circle cx="892.5" cy="588.5" r="2.9"/><circle cx="866.4" cy="523.7" r="2.9"/><circle cx="863.4" cy="540.3" r="2.9"/><circle cx="929.7" cy="612.9" r="2.9"/><circle cx="936.5" cy="549.3" r="2.9"/><circle cx="852.5" cy="592.5" r="2.9"/><circle cx="947.3" cy="591.4" r="2.9"/><circle cx="918.9" cy="533.0" r="2.9"/><circle cx="896.2" cy="599.5" r="2.9"/><circle cx="862.3" cy="574.7" r="2.9"/><circle cx="870.3" cy="599.2" r="2.9"/><circle cx="917.5" cy="610.0" r="2.9"/><circle cx="934.3" cy="588.0" r="2.9"/><circle cx="940.6" cy="579.8" r="2.9"/><circle cx="889.3" cy="618.9" r="2.9"/><circle cx="917.1" cy="609.1" r="2.9"/><circle cx="848.6" cy="578.9" r="2.9"/><circle cx="831.4" cy="571.5" r="2.9"/><circle cx="875.1" cy="613.7" r="2.9"/><circle cx="895.0" cy="591.1" r="2.9"/><circle cx="834.7" cy="569.3" r="2.9"/><circle cx="917.6" cy="597.6" r="2.9"/><circle cx="859.5" cy="576.7" r="2.9"/><circle cx="863.0" cy="578.3" r="2.9"/><circle cx="850.6" cy="575.3" r="2.9"/><circle cx="891.3" cy="623.6" r="2.9"/><circle cx="854.2" cy="575.5" r="2.9"/><circle cx="853.8" cy="569.1" r="2.9"/><circle cx="886.8" cy="559.7" r="2.9"/><circle cx="868.4" cy="536.3" r="2.9"/><circle cx="938.3" cy="612.0" r="2.9"/><circle cx="873.7" cy="568.6" r="2.9"/><circle cx="898.6" cy="608.7" r="2.9"/><circle cx="867.5" cy="576.0" r="2.9"/><circle cx="937.3" cy="556.6" r="2.9"/><circle cx="909.4" cy="530.8" r="2.9"/><circle cx="887.0" cy="584.8" r="2.9"/><circle cx="878.5" cy="605.0" r="2.9"/><circle cx="938.0" cy="548.2" r="2.9"/><circle cx="926.9" cy="604.9" r="2.9"/><circle cx="905.5" cy="585.4" r="2.9"/><circle cx="901.8" cy="603.0" r="2.9"/><circle cx="917.8" cy="547.3" r="2.9"/><circle cx="912.5" cy="599.6" r="2.9"/><circle cx="888.1" cy="621.6" r="2.9"/><circle cx="868.9" cy="580.6" r="2.9"/><circle cx="906.4" cy="536.9" r="2.9"/><circle cx="914.9" cy="528.8" r="2.9"/><circle cx="918.4" cy="617.1" r="2.9"/><circle cx="893.6" cy="519.9" r="2.9"/><circle cx="865.6" cy="549.3" r="2.9"/><circle cx="874.8" cy="605.0" r="2.9"/><circle cx="949.1" cy="559.7" r="2.9"/><circle cx="916.8" cy="602.2" r="2.9"/><circle cx="922.2" cy="562.5" r="2.9"/><circle cx="913.3" cy="556.8" r="2.9"/><circle cx="914.6" cy="523.0" r="2.9"/><circle cx="917.9" cy="608.0" r="2.9"/><circle cx="938.4" cy="584.8" r="2.9"/><circle cx="944.5" cy="592.2" r="2.9"/><circle cx="871.4" cy="535.9" r="2.9"/><circle cx="861.9" cy="595.2" r="2.9"/><circle cx="861.6" cy="535.5" r="2.9"/><circle cx="920.4" cy="594.2" r="2.9"/><circle cx="926.5" cy="567.6" r="2.9"/><circle cx="924.9" cy="594.1" r="2.9"/><circle cx="872.3" cy="534.9" r="2.9"/><circle cx="877.1" cy="600.4" r="2.9"/><circle cx="925.6" cy="551.2" r="2.9"/><circle cx="898.4" cy="523.9" r="2.9"/><circle cx="927.8" cy="617.5" r="2.9"/><circle cx="865.9" cy="532.3" r="2.9"/><circle cx="932.9" cy="557.8" r="2.9"/><circle cx="928.6" cy="557.4" r="2.9"/><circle cx="870.8" cy="565.7" r="2.9"/><circle cx="919.0" cy="552.6" r="2.9"/><circle cx="931.3" cy="570.9" r="2.9"/><circle cx="887.9" cy="602.0" r="2.9"/><circle cx="938.3" cy="586.4" r="2.9"/><circle cx="934.8" cy="549.9" r="2.9"/><circle cx="905.5" cy="524.4" r="2.9"/><circle cx="878.8" cy="600.9" r="2.9"/><circle cx="861.1" cy="532.8" r="2.9"/><circle cx="907.7" cy="620.8" r="2.9"/><circle cx="897.8" cy="584.2" r="2.9"/><circle cx="947.5" cy="602.1" r="2.9"/><circle cx="861.7" cy="548.7" r="2.9"/><circle cx="916.5" cy="541.8" r="2.9"/><circle cx="932.6" cy="593.3" r="2.9"/><circle cx="847.6" cy="584.0" r="2.9"/><circle cx="839.6" cy="566.1" r="2.9"/><circle cx="931.0" cy="569.1" r="2.9"/><circle cx="922.5" cy="542.8" r="2.9"/><circle cx="885.1" cy="536.1" r="2.9"/><circle cx="892.5" cy="600.9" r="2.9"/><circle cx="928.9" cy="530.8" r="2.9"/><circle cx="934.5" cy="566.7" r="2.9"/><circle cx="932.1" cy="597.7" r="2.9"/><circle cx="876.6" cy="595.6" r="2.9"/><circle cx="941.0" cy="620.2" r="2.9"/><circle cx="885.2" cy="587.2" r="2.9"/><circle cx="913.8" cy="563.2" r="2.9"/><circle cx="880.2" cy="624.6" r="2.9"/><circle cx="889.3" cy="618.0" r="2.9"/><circle cx="858.7" cy="549.2" r="2.9"/><circle cx="875.9" cy="553.1" r="2.9"/><circle cx="916.6" cy="568.1" r="2.9"/><circle cx="942.2" cy="597.8" r="2.9"/><circle cx="936.2" cy="565.9" r="2.9"/><circle cx="879.3" cy="568.8" r="2.9"/><circle cx="907.3" cy="564.0" r="2.9"/><circle cx="849.8" cy="571.0" r="2.9"/><circle cx="920.1" cy="547.0" r="2.9"/><circle cx="862.5" cy="575.8" r="2.9"/><circle cx="876.6" cy="599.4" r="2.9"/><circle cx="927.4" cy="542.1" r="2.9"/><circle cx="929.5" cy="594.6" r="2.9"/><circle cx="898.6" cy="521.3" r="2.9"/><circle cx="904.4" cy="592.9" r="2.9"/><circle cx="905.2" cy="599.7" r="2.9"/><circle cx="925.7" cy="599.5" r="2.9"/><circle cx="921.2" cy="600.1" r="2.9"/><circle cx="885.4" cy="590.8" r="2.9"/><circle cx="889.9" cy="558.9" r="2.9"/><circle cx="922.3" cy="564.5" r="2.9"/><circle cx="940.7" cy="615.7" r="2.9"/><circle cx="940.9" cy="604.2" r="2.9"/><circle cx="850.4" cy="565.2" r="2.9"/><circle cx="937.3" cy="557.4" r="2.9"/><circle cx="902.4" cy="540.1" r="2.9"/><circle cx="935.2" cy="554.7" r="2.9"/><circle cx="885.8" cy="528.4" r="2.9"/><circle cx="879.0" cy="606.5" r="2.9"/><circle cx="875.5" cy="568.3" r="2.9"/><circle cx="864.2" cy="607.8" r="2.9"/><circle cx="862.7" cy="555.7" r="2.9"/><circle cx="882.8" cy="542.1" r="2.9"/><circle cx="861.1" cy="608.7" r="2.9"/><circle cx="927.3" cy="546.3" r="2.9"/><circle cx="898.9" cy="620.6" r="2.9"/><circle cx="895.6" cy="556.5" r="2.9"/><circle cx="943.9" cy="611.6" r="2.9"/><circle cx="925.1" cy="559.8" r="2.9"/><circle cx="918.5" cy="578.6" r="2.9"/><circle cx="838.7" cy="582.7" r="2.9"/><circle cx="863.1" cy="600.9" r="2.9"/><circle cx="886.1" cy="617.2" r="2.9"/><circle cx="920.4" cy="547.5" r="2.9"/><circle cx="886.0" cy="615.6" r="2.9"/><circle cx="921.8" cy="532.6" r="2.9"/><circle cx="901.8" cy="597.4" r="2.9"/><circle cx="863.2" cy="571.4" r="2.9"/><circle cx="887.9" cy="527.3" r="2.9"/><circle cx="876.0" cy="568.9" r="2.9"/><circle cx="876.1" cy="547.3" r="2.9"/><circle cx="951.3" cy="558.6" r="2.9"/><circle cx="873.9" cy="581.7" r="2.9"/><circle cx="859.4" cy="548.9" r="2.9"/><circle cx="894.7" cy="602.4" r="2.9"/><circle cx="864.0" cy="594.3" r="2.9"/><circle cx="865.0" cy="600.4" r="2.9"/><circle cx="888.3" cy="625.8" r="2.9"/><circle cx="879.4" cy="567.0" r="2.9"/><circle cx="897.5" cy="555.4" r="2.9"/><circle cx="883.0" cy="613.4" r="2.9"/><circle cx="927.7" cy="544.0" r="2.9"/><circle cx="935.7" cy="587.9" r="2.9"/><circle cx="921.6" cy="566.1" r="2.9"/><circle cx="884.5" cy="612.1" r="2.9"/><circle cx="864.1" cy="522.6" r="2.9"/><circle cx="844.8" cy="565.8" r="2.9"/><circle cx="928.6" cy="542.8" r="2.9"/><circle cx="882.8" cy="625.9" r="2.9"/><circle cx="941.0" cy="618.4" r="2.9"/><circle cx="900.8" cy="532.9" r="2.9"/><circle cx="838.2" cy="571.3" r="2.9"/><circle cx="907.1" cy="584.7" r="2.9"/><circle cx="922.3" cy="553.2" r="2.9"/><circle cx="917.7" cy="530.7" r="2.9"/><circle cx="855.1" cy="565.0" r="2.9"/><circle cx="929.7" cy="553.4" r="2.9"/><circle cx="889.2" cy="586.9" r="2.9"/><circle cx="860.1" cy="529.1" r="2.9"/><circle cx="920.7" cy="595.7" r="2.9"/><circle cx="855.6" cy="593.2" r="2.9"/><circle cx="919.4" cy="536.8" r="2.9"/><circle cx="920.2" cy="547.5" r="2.9"/><circle cx="924.4" cy="584.1" r="2.9"/><circle cx="909.9" cy="557.7" r="2.9"/><circle cx="914.9" cy="560.5" r="2.9"/><circle cx="878.0" cy="553.6" r="2.9"/><circle cx="865.9" cy="523.9" r="2.9"/><circle cx="926.3" cy="557.4" r="2.9"/><circle cx="884.5" cy="523.0" r="2.9"/><circle cx="925.1" cy="575.4" r="2.9"/><circle cx="938.2" cy="614.3" r="2.9"/><circle cx="935.1" cy="620.0" r="2.9"/><circle cx="877.9" cy="611.3" r="2.9"/><circle cx="892.4" cy="592.6" r="2.9"/><circle cx="902.0" cy="615.2" r="2.9"/><circle cx="935.5" cy="616.8" r="2.9"/><circle cx="883.3" cy="523.4" r="2.9"/><circle cx="940.4" cy="563.8" r="2.9"/><circle cx="898.9" cy="607.8" r="2.9"/><circle cx="904.4" cy="534.9" r="2.9"/><circle cx="897.2" cy="526.2" r="2.9"/><circle cx="944.3" cy="609.3" r="2.9"/><circle cx="871.3" cy="566.0" r="2.9"/><circle cx="924.0" cy="575.8" r="2.9"/><circle cx="910.7" cy="555.0" r="2.9"/><circle cx="902.0" cy="585.5" r="2.9"/><circle cx="860.0" cy="497.8" r="2.9"/><circle cx="808.0" cy="514.8" r="2.9"/><circle cx="817.5" cy="512.0" r="2.9"/><circle cx="837.0" cy="509.2" r="2.9"/><circle cx="846.7" cy="513.3" r="2.9"/><circle cx="810.2" cy="526.6" r="2.9"/><circle cx="825.2" cy="529.0" r="2.9"/><circle cx="829.2" cy="535.0" r="2.9"/><circle cx="834.7" cy="534.3" r="2.9"/><circle cx="857.8" cy="519.0" r="2.9"/><circle cx="851.5" cy="523.2" r="2.9"/><circle cx="844.5" cy="527.0" r="2.9"/><circle cx="848.0" cy="532.5" r="2.9"/><circle cx="851.5" cy="533.5" r="2.9"/><circle cx="857.0" cy="536.8" r="2.9"/><circle cx="860.5" cy="538.5" r="2.9"/><circle cx="818.5" cy="541.0" r="2.9"/><circle cx="819.5" cy="544.5" r="2.9"/><circle cx="826.0" cy="543.2" r="2.9"/><circle cx="833.0" cy="546.5" r="2.9"/><circle cx="838.0" cy="543.0" r="2.9"/><circle cx="842.0" cy="542.0" r="2.9"/><circle cx="847.0" cy="544.0" r="2.9"/><circle cx="847.0" cy="549.0" r="2.9"/><circle cx="817.0" cy="556.0" r="2.9"/><circle cx="821.0" cy="554.0" r="2.9"/><circle cx="825.0" cy="556.0" r="2.9"/><circle cx="829.0" cy="553.0" r="2.9"/><circle cx="828.0" cy="562.0" r="2.9"/><circle cx="833.0" cy="558.0" r="2.9"/><circle cx="842.0" cy="554.5" r="2.9"/><circle cx="842.5" cy="558.0" r="2.9"/><circle cx="801.8" cy="569.0" r="2.9"/><circle cx="818.0" cy="570.0" r="2.9"/><circle cx="817.5" cy="575.0" r="2.9"/><circle cx="900.5" cy="501.0" r="2.9"/><circle cx="905.5" cy="499.0" r="2.9"/><circle cx="904.0" cy="512.0" r="2.9"/><circle cx="907.0" cy="515.5" r="2.9"/><circle cx="924.0" cy="486.0" r="2.9"/><circle cx="878.0" cy="509.0" r="2.9"/><circle cx="876.0" cy="512.0" r="2.9"/><circle cx="879.5" cy="514.5" r="2.9"/><circle cx="885.0" cy="505.0" r="2.9"/><circle cx="891.5" cy="503.5" r="2.9"/><circle cx="888.5" cy="511.0" r="2.9"/><circle cx="872.0" cy="516.5" r="2.9"/><circle cx="873.0" cy="525.0" r="2.9"/><circle cx="864.0" cy="522.0" r="2.9"/><circle cx="925.8" cy="486.2" r="2.9"/><circle cx="943.2" cy="497.5" r="2.9"/><circle cx="905.0" cy="499.0" r="2.9"/><circle cx="901.0" cy="501.5" r="2.9"/><circle cx="929.0" cy="508.3" r="2.9"/><circle cx="924.0" cy="515.3" r="2.9"/><circle cx="940.0" cy="509.5" r="2.9"/><circle cx="941.5" cy="513.0" r="2.9"/><circle cx="947.8" cy="509.7" r="2.9"/><circle cx="962.5" cy="518.7" r="2.9"/><circle cx="904.5" cy="512.0" r="2.9"/><circle cx="907.0" cy="516.0" r="2.9"/><circle cx="941.0" cy="521.0" r="2.9"/><circle cx="939.5" cy="526.5" r="2.9"/><circle cx="947.0" cy="524.5" r="2.9"/><circle cx="947.5" cy="533.8" r="2.9"/><circle cx="956.0" cy="529.5" r="2.9"/><circle cx="961.0" cy="529.0" r="2.9"/><circle cx="960.0" cy="533.0" r="2.9"/><circle cx="955.0" cy="536.0" r="2.9"/><circle cx="958.0" cy="539.0" r="2.9"/><circle cx="959.0" cy="542.5" r="2.9"/><circle cx="957.5" cy="546.0" r="2.9"/><circle cx="950.0" cy="542.0" r="2.9"/><circle cx="945.0" cy="545.0" r="2.9"/><circle cx="942.0" cy="550.0" r="2.9"/><circle cx="971.5" cy="538.5" r="2.9"/><circle cx="970.0" cy="544.5" r="2.9"/><circle cx="974.5" cy="548.5" r="2.9"/><circle cx="982.0" cy="549.0" r="2.9"/><circle cx="966.0" cy="550.5" r="2.9"/><circle cx="964.0" cy="553.0" r="2.9"/><circle cx="970.0" cy="554.0" r="2.9"/><circle cx="956.5" cy="552.5" r="2.9"/><circle cx="955.0" cy="562.0" r="2.9"/><circle cx="960.0" cy="561.0" r="2.9"/><circle cx="965.0" cy="565.0" r="2.9"/><circle cx="975.0" cy="562.8" r="2.9"/><circle cx="981.0" cy="569.0" r="2.9"/><circle cx="950.0" cy="570.0" r="2.9"/><circle cx="966.0" cy="576.5" r="2.9"/><circle cx="970.0" cy="574.5" r="2.9"/><circle cx="978.0" cy="577.5" r="2.9"/><circle cx="906.0" cy="556.0" r="2.9"/><circle cx="901.0" cy="560.0" r="2.9"/><circle cx="801.5" cy="570.5" r="2.9"/><circle cx="813.0" cy="581.8" r="2.9"/><circle cx="811.0" cy="597.0" r="2.9"/><circle cx="816.0" cy="604.8" r="2.9"/><circle cx="817.0" cy="575.0" r="2.9"/><circle cx="821.0" cy="579.0" r="2.9"/><circle cx="824.0" cy="581.0" r="2.9"/><circle cx="823.0" cy="587.0" r="2.9"/><circle cx="821.0" cy="591.0" r="2.9"/><circle cx="819.0" cy="592.0" r="2.9"/><circle cx="831.0" cy="594.0" r="2.9"/><circle cx="836.0" cy="592.0" r="2.9"/><circle cx="838.0" cy="597.0" r="2.9"/><circle cx="845.0" cy="597.0" r="2.9"/><circle cx="849.0" cy="600.0" r="2.9"/><circle cx="829.0" cy="603.0" r="2.9"/><circle cx="834.0" cy="605.0" r="2.9"/><circle cx="825.0" cy="609.0" r="2.9"/><circle cx="826.0" cy="612.0" r="2.9"/><circle cx="823.0" cy="616.5" r="2.9"/><circle cx="834.0" cy="616.0" r="2.9"/><circle cx="834.0" cy="624.5" r="2.9"/><circle cx="842.0" cy="608.0" r="2.9"/><circle cx="846.0" cy="611.0" r="2.9"/><circle cx="845.0" cy="616.0" r="2.9"/><circle cx="847.5" cy="621.5" r="2.9"/><circle cx="826.5" cy="632.0" r="2.9"/><circle cx="849.0" cy="633.0" r="2.9"/><circle cx="852.5" cy="636.5" r="2.9"/><circle cx="854.5" cy="614.0" r="2.9"/><circle cx="864.0" cy="625.5" r="2.9"/><circle cx="863.0" cy="637.2" r="2.9"/><circle cx="873.5" cy="621.5" r="2.9"/><circle cx="877.0" cy="630.0" r="2.9"/><circle cx="879.0" cy="640.5" r="2.9"/><circle cx="871.5" cy="650.8" r="2.9"/><circle cx="892.0" cy="646.0" r="2.9"/><circle cx="890.0" cy="639.0" r="2.9"/><circle cx="887.0" cy="632.0" r="2.9"/><circle cx="915.0" cy="650.5" r="2.9"/><circle cx="899.0" cy="638.0" r="2.9"/><circle cx="904.0" cy="631.0" r="2.9"/><circle cx="901.0" cy="635.0" r="2.9"/><circle cx="912.0" cy="631.0" r="2.9"/><circle cx="917.0" cy="627.0" r="2.9"/><circle cx="922.0" cy="623.5" r="2.9"/><circle cx="981.0" cy="570.5" r="2.9"/><circle cx="950.0" cy="571.5" r="2.9"/><circle cx="966.0" cy="577.5" r="2.9"/><circle cx="970.0" cy="574.5" r="2.9"/><circle cx="972.0" cy="581.0" r="2.9"/><circle cx="978.0" cy="578.0" r="2.9"/><circle cx="982.0" cy="583.0" r="2.9"/><circle cx="987.5" cy="586.0" r="2.9"/><circle cx="995.0" cy="586.8" r="2.9"/><circle cx="954.0" cy="583.0" r="2.9"/><circle cx="957.0" cy="593.0" r="2.9"/><circle cx="956.0" cy="600.0" r="2.9"/><circle cx="965.0" cy="597.0" r="2.9"/><circle cx="968.0" cy="598.0" r="2.9"/><circle cx="963.0" cy="601.0" r="2.9"/><circle cx="976.0" cy="601.2" r="2.9"/><circle cx="960.5" cy="607.0" r="2.9"/><circle cx="954.5" cy="614.0" r="2.9"/><circle cx="955.5" cy="622.5" r="2.9"/><circle cx="947.0" cy="614.0" r="2.9"/><circle cx="948.0" cy="621.0" r="2.9"/><circle cx="946.0" cy="627.0" r="2.9"/><circle cx="939.0" cy="628.0" r="2.9"/><circle cx="938.0" cy="630.0" r="2.9"/><circle cx="942.0" cy="607.5" r="2.9"/><circle cx="952.0" cy="606.0" r="2.9"/><circle cx="925.5" cy="615.5" r="2.9"/><circle cx="922.0" cy="623.5" r="2.9"/><circle cx="917.0" cy="627.0" r="2.9"/><circle cx="927.0" cy="628.5" r="2.9"/><circle cx="932.0" cy="632.5" r="2.9"/><circle cx="930.5" cy="639.5" r="2.9"/><circle cx="929.5" cy="647.0" r="2.9"/><circle cx="915.0" cy="650.5" r="2.9"/><circle cx="963.5" cy="649.5" r="2.9"/><circle cx="912.0" cy="631.0" r="2.9"/><circle cx="911.0" cy="626.0" r="2.9"/><circle cx="904.0" cy="631.0" r="2.9"/><circle cx="902.0" cy="637.0" r="2.9"/></g>
  <!-- plot frame -->
  <path d="M568 215.8 L1225 215.8 L1225 928.5" fill="none" stroke="#505050" stroke-width="1.3"/>
  <path d="M568.3 215.5 L568.3 928.8 L1225.5 928.8" fill="none" stroke="#1a1a1a" stroke-width="1.6"/>
  <g stroke="#111" stroke-width="1"><line x1="564" y1="223.60" x2="568" y2="223.60" /><line x1="564" y1="273.30" x2="568" y2="273.30" /><line x1="564" y1="323.00" x2="568" y2="323.00" /><line x1="564" y1="372.70" x2="568" y2="372.70" /><line x1="564" y1="422.40" x2="568" y2="422.40" /><line x1="564" y1="472.10" x2="568" y2="472.10" /><line x1="564" y1="521.80" x2="568" y2="521.80" /><line x1="564" y1="571.50" x2="568" y2="571.50" /><line x1="564" y1="621.20" x2="568" y2="621.20" /><line x1="564" y1="670.90" x2="568" y2="670.90" /><line x1="564" y1="720.60" x2="568" y2="720.60" /><line x1="564" y1="770.30" x2="568" y2="770.30" /><line x1="564" y1="820.00" x2="568" y2="820.00" /><line x1="564" y1="869.70" x2="568" y2="869.70" /><line x1="564" y1="919.40" x2="568" y2="919.40" /><line x1="566.5" y1="909.46" x2="568" y2="909.46" /><line x1="566.5" y1="899.52" x2="568" y2="899.52" /><line x1="566.5" y1="889.58" x2="568" y2="889.58" /><line x1="566.5" y1="879.64" x2="568" y2="879.64" /><line x1="566.5" y1="859.76" x2="568" y2="859.76" /><line x1="566.5" y1="849.82" x2="568" y2="849.82" /><line x1="566.5" y1="839.88" x2="568" y2="839.88" /><line x1="566.5" y1="829.94" x2="568" y2="829.94" /><line x1="566.5" y1="810.06" x2="568" y2="810.06" /><line x1="566.5" y1="800.12" x2="568" y2="800.12" /><line x1="566.5" y1="790.18" x2="568" y2="790.18" /><line x1="566.5" y1="780.24" x2="568" y2="780.24" /><line x1="566.5" y1="760.36" x2="568" y2="760.36" /><line x1="566.5" y1="750.42" x2="568" y2="750.42" /><line x1="566.5" y1="740.48" x2="568" y2="740.48" /><line x1="566.5" y1="730.54" x2="568" y2="730.54" /><line x1="566.5" y1="710.66" x2="568" y2="710.66" /><line x1="566.5" y1="700.72" x2="568" y2="700.72" /><line x1="566.5" y1="690.78" x2="568" y2="690.78" /><line x1="566.5" y1="680.84" x2="568" y2="680.84" /><line x1="566.5" y1="660.96" x2="568" y2="660.96" /><line x1="566.5" y1="651.02" x2="568" y2="651.02" /><line x1="566.5" y1="641.08" x2="568" y2="641.08" /><line x1="566.5" y1="631.14" x2="568" y2="631.14" /><line x1="566.5" y1="611.26" x2="568" y2="611.26" /><line x1="566.5" y1="601.32" x2="568" y2="601.32" /><line x1="566.5" y1="591.38" x2="568" y2="591.38" /><line x1="566.5" y1="581.44" x2="568" y2="581.44" /><line x1="566.5" y1="561.56" x2="568" y2="561.56" /><line x1="566.5" y1="551.62" x2="568" y2="551.62" /><line x1="566.5" y1="541.68" x2="568" y2="541.68" /><line x1="566.5" y1="531.74" x2="568" y2="531.74" /><line x1="566.5" y1="511.86" x2="568" y2="511.86" /><line x1="566.5" y1="501.92" x2="568" y2="501.92" /><line x1="566.5" y1="491.98" x2="568" y2="491.98" /><line x1="566.5" y1="482.04" x2="568" y2="482.04" /><line x1="566.5" y1="462.16" x2="568" y2="462.16" /><line x1="566.5" y1="452.22" x2="568" y2="452.22" /><line x1="566.5" y1="442.28" x2="568" y2="442.28" /><line x1="566.5" y1="432.34" x2="568" y2="432.34" /><line x1="566.5" y1="412.46" x2="568" y2="412.46" /><line x1="566.5" y1="402.52" x2="568" y2="402.52" /><line x1="566.5" y1="392.58" x2="568" y2="392.58" /><line x1="566.5" y1="382.64" x2="568" y2="382.64" /><line x1="566.5" y1="362.76" x2="568" y2="362.76" /><line x1="566.5" y1="352.82" x2="568" y2="352.82" /><line x1="566.5" y1="342.88" x2="568" y2="342.88" /><line x1="566.5" y1="332.94" x2="568" y2="332.94" /><line x1="566.5" y1="313.06" x2="568" y2="313.06" /><line x1="566.5" y1="303.12" x2="568" y2="303.12" /><line x1="566.5" y1="293.18" x2="568" y2="293.18" /><line x1="566.5" y1="283.24" x2="568" y2="283.24" /><line x1="566.5" y1="263.36" x2="568" y2="263.36" /><line x1="566.5" y1="253.42" x2="568" y2="253.42" /><line x1="566.5" y1="243.48" x2="568" y2="243.48" /><line x1="566.5" y1="233.54" x2="568" y2="233.54" /><line x1="598.05" y1="928" x2="598.05" y2="932.5" /><line x1="697.45" y1="928" x2="697.45" y2="932.5" /><line x1="796.85" y1="928" x2="796.85" y2="932.5" /><line x1="896.25" y1="928" x2="896.25" y2="932.5" /><line x1="995.65" y1="928" x2="995.65" y2="932.5" /><line x1="1095.05" y1="928" x2="1095.05" y2="932.5" /><line x1="1194.45" y1="928" x2="1194.45" y2="932.5" /><line x1="578.17" y1="928" x2="578.17" y2="930" /><line x1="617.93" y1="928" x2="617.93" y2="930" /><line x1="637.81" y1="928" x2="637.81" y2="930" /><line x1="657.69" y1="928" x2="657.69" y2="930" /><line x1="677.57" y1="928" x2="677.57" y2="930" /><line x1="717.33" y1="928" x2="717.33" y2="930" /><line x1="737.21" y1="928" x2="737.21" y2="930" /><line x1="757.09" y1="928" x2="757.09" y2="930" /><line x1="776.97" y1="928" x2="776.97" y2="930" /><line x1="816.73" y1="928" x2="816.73" y2="930" /><line x1="836.61" y1="928" x2="836.61" y2="930" /><line x1="856.49" y1="928" x2="856.49" y2="930" /><line x1="876.37" y1="928" x2="876.37" y2="930" /><line x1="916.13" y1="928" x2="916.13" y2="930" /><line x1="936.01" y1="928" x2="936.01" y2="930" /><line x1="955.89" y1="928" x2="955.89" y2="930" /><line x1="975.77" y1="928" x2="975.77" y2="930" /><line x1="1015.53" y1="928" x2="1015.53" y2="930" /><line x1="1035.41" y1="928" x2="1035.41" y2="930" /><line x1="1055.29" y1="928" x2="1055.29" y2="930" /><line x1="1075.17" y1="928" x2="1075.17" y2="930" /><line x1="1114.93" y1="928" x2="1114.93" y2="930" /><line x1="1134.81" y1="928" x2="1134.81" y2="930" /><line x1="1154.69" y1="928" x2="1154.69" y2="930" /><line x1="1174.57" y1="928" x2="1174.57" y2="930" /><line x1="1214.33" y1="928" x2="1214.33" y2="930" /></g>
</svg>
<div class="t" style="left:61.50px;top:35.50px;font-size:13px;font-weight:400;color:#1a1a1a;transform:scaleX(1.0270);">Drill Optimizer-v1.4</div><div class="t" style="left:175.00px;top:80.28px;font-size:16.5px;font-weight:400;color:#555c64;transform:scaleX(0.9280);">Reset</div><div class="t" style="left:293.00px;top:80.28px;font-size:16.5px;font-weight:400;color:#555c64;transform:scaleX(1.0160);">Acknowledge All</div><div class="t" style="left:486.00px;top:80.28px;font-size:16.5px;font-weight:400;color:#555c64;transform:scaleX(1.0536);">Abort Optimization</div><div class="t" style="left:38.00px;top:135.11px;font-size:17px;font-weight:400;color:#4c545c;transform:scaleX(0.9299);">X axis Name:</div><div class="t" style="left:151.00px;top:135.11px;font-size:17px;font-weight:400;color:#111;transform:scaleX(0.8143);">GX</div><div class="t" style="left:230.00px;top:135.11px;font-size:17px;font-weight:400;color:#4c545c;transform:scaleX(0.9200);">Y axis Name:</div><div class="t" style="left:342.00px;top:135.11px;font-size:17px;font-weight:400;color:#111;transform:scaleX(0.7736);">GY</div><div class="t" style="left:51.00px;top:180.11px;font-size:17px;font-weight:400;color:#3a4149;transform:scaleX(1.0257);-webkit-text-stroke:0.75px currentColor;">Step and Settle Optimization</div><div class="t" style="left:319.00px;top:179.78px;font-size:16.5px;font-weight:400;color:#5a626b;transform:scaleX(1.0236);">Motion Sequence Optimization</div><div class="t" style="left:196.00px;top:217.74px;font-size:17.5px;font-weight:400;color:#ffffff;transform:scaleX(0.9779);-webkit-text-stroke:0.6px currentColor;">Start Optimization</div><div class="t" style="left:39.00px;top:259.61px;font-size:17px;font-weight:400;color:#4c545c;transform:scaleX(0.9889);">Settle Window (mm):</div><div class="t" style="left:39.00px;top:302.61px;font-size:17px;font-weight:400;color:#4c545c;transform:scaleX(0.9965);">Dwell Time (milli-sec):</div><div class="t" style="left:39.00px;top:345.61px;font-size:17px;font-weight:400;color:#4c545c;transform:scaleX(0.9860);">Test Iterations:</div><div class="t" style="left:39.00px;top:387.71px;font-size:17px;font-weight:400;color:#4c545c;">Output File:</div><div class="t" style="left:39.00px;top:430.51px;font-size:17px;font-weight:400;color:#4c545c;transform:scaleX(0.9643);">Use Drill Point Test File:</div><div class="t" style="left:39.00px;top:473.11px;font-size:17px;font-weight:400;color:#4c545c;transform:scaleX(0.9742);">Drill Points Test File:</div><div class="t" style="left:39.00px;top:516.11px;font-size:17px;font-weight:400;color:#4c545c;transform:scaleX(0.9704);">Water Cooling Active:</div><div class="t" style="left:451.50px;top:259.78px;font-size:16.5px;font-weight:400;color:#111;transform:scaleX(0.9445);">0.003</div><div class="t" style="left:460.50px;top:302.78px;font-size:16.5px;font-weight:400;color:#111;transform:scaleX(0.9342);">0.03</div><div class="t" style="left:474.50px;top:345.78px;font-size:16.5px;font-weight:400;color:#111;transform:scaleX(0.8718);">10</div><div class="t" style="left:39.00px;top:557.47px;font-size:20px;font-weight:400;color:#4c545c;transform:scaleX(1.0120);">Status:</div><div class="t" style="left:41.00px;top:593.26px;font-size:16px;font-weight:400;color:#1e1e1e;transform:scaleX(1.0770);">Connecting to controller</div><div class="t" style="left:41.00px;top:620.38px;font-size:16px;font-weight:400;color:#1e1e1e;transform:scaleX(1.0730);">Writing parameters to controller.</div><div class="t" style="left:41.00px;top:647.50px;font-size:16px;font-weight:400;color:#1e1e1e;transform:scaleX(1.0526);">Resetting controller to activate parameter changes.</div><div class="t" style="left:41.00px;top:674.62px;font-size:16px;font-weight:400;color:#1e1e1e;transform:scaleX(1.0295);">Running GX Axis System Identification</div><div class="t" style="left:41.00px;top:701.74px;font-size:16px;font-weight:400;color:#1e1e1e;transform:scaleX(1.0295);">Running GY Axis System Identification</div><div class="t" style="left:41.00px;top:728.86px;font-size:16px;font-weight:400;color:#1e1e1e;transform:scaleX(1.0224);">System ID Complete</div><div class="t" style="left:41.00px;top:755.98px;font-size:16px;font-weight:400;color:#1e1e1e;transform:scaleX(1.0436);">Generating Motion Constraints File</div><div class="t" style="left:113.00px;top:783.10px;font-size:16px;font-weight:400;color:#1e1e1e;transform:scaleX(1.0429);">Maximum Errors:</div><div class="t" style="left:185.00px;top:810.22px;font-size:16px;font-weight:400;color:#1e1e1e;transform:scaleX(0.9831);">Vector: 1.058, X: 0.99, Y: 0.86</div><div class="t" style="left:113.00px;top:837.34px;font-size:16px;font-weight:400;color:#1e1e1e;transform:scaleX(1.0197);">Rms Current:</div><div class="t" style="left:185.00px;top:864.46px;font-size:16px;font-weight:400;color:#1e1e1e;transform:scaleX(0.9414);">X: 0.51, Y: 0.51</div><div class="t" style="left:519.03px;top:222.95px;font-size:14px;font-weight:400;color:#3c3c3c;transform:scaleX(0.9100);-webkit-text-stroke:0.1px currentColor;">0.0035</div><div class="t" style="left:526.12px;top:272.65px;font-size:14px;font-weight:400;color:#3c3c3c;transform:scaleX(0.9100);-webkit-text-stroke:0.1px currentColor;">0.003</div><div class="t" style="left:519.03px;top:322.35px;font-size:14px;font-weight:400;color:#3c3c3c;transform:scaleX(0.9100);-webkit-text-stroke:0.1px currentColor;">0.0025</div><div class="t" style="left:526.12px;top:372.05px;font-size:14px;font-weight:400;color:#3c3c3c;transform:scaleX(0.9100);-webkit-text-stroke:0.1px currentColor;">0.002</div><div class="t" style="left:519.03px;top:421.75px;font-size:14px;font-weight:400;color:#3c3c3c;transform:scaleX(0.9100);-webkit-text-stroke:0.1px currentColor;">0.0015</div><div class="t" style="left:526.12px;top:471.45px;font-size:14px;font-weight:400;color:#3c3c3c;transform:scaleX(0.9100);-webkit-text-stroke:0.1px currentColor;">0.001</div><div class="t" style="left:519.03px;top:521.15px;font-size:14px;font-weight:400;color:#3c3c3c;transform:scaleX(0.9100);-webkit-text-stroke:0.1px currentColor;">0.0005</div><div class="t" style="left:550.91px;top:570.85px;font-size:14px;font-weight:400;color:#3c3c3c;transform:scaleX(0.9100);-webkit-text-stroke:0.1px currentColor;">0</div><div class="t" style="left:514.79px;top:620.55px;font-size:14px;font-weight:400;color:#3c3c3c;transform:scaleX(0.9100);-webkit-text-stroke:0.1px currentColor;">-0.0005</div><div class="t" style="left:521.88px;top:670.25px;font-size:14px;font-weight:400;color:#3c3c3c;transform:scaleX(0.9100);-webkit-text-stroke:0.1px currentColor;">-0.001</div><div class="t" style="left:514.79px;top:719.95px;font-size:14px;font-weight:400;color:#3c3c3c;transform:scaleX(0.9100);-webkit-text-stroke:0.1px currentColor;">-0.0015</div><div class="t" style="left:521.88px;top:769.65px;font-size:14px;font-weight:400;color:#3c3c3c;transform:scaleX(0.9100);-webkit-text-stroke:0.1px currentColor;">-0.002</div><div class="t" style="left:514.79px;top:819.35px;font-size:14px;font-weight:400;color:#3c3c3c;transform:scaleX(0.9100);-webkit-text-stroke:0.1px currentColor;">-0.0025</div><div class="t" style="left:521.88px;top:869.05px;font-size:14px;font-weight:400;color:#3c3c3c;transform:scaleX(0.9100);-webkit-text-stroke:0.1px currentColor;">-0.003</div><div class="t" style="left:514.79px;top:918.75px;font-size:14px;font-weight:400;color:#3c3c3c;transform:scaleX(0.9100);-webkit-text-stroke:0.1px currentColor;">-0.0035</div><div class="t" style="left:579.99px;top:941.85px;font-size:14px;font-weight:400;color:#3c3c3c;transform:scaleX(0.9100);-webkit-text-stroke:0.1px currentColor;">-0.003</div><div class="t" style="left:679.39px;top:941.85px;font-size:14px;font-weight:400;color:#3c3c3c;transform:scaleX(0.9100);-webkit-text-stroke:0.1px currentColor;">-0.002</div><div class="t" style="left:778.79px;top:941.85px;font-size:14px;font-weight:400;color:#3c3c3c;transform:scaleX(0.9100);-webkit-text-stroke:0.1px currentColor;">-0.001</div><div class="t" style="left:892.71px;top:941.85px;font-size:14px;font-weight:400;color:#3c3c3c;transform:scaleX(0.9100);-webkit-text-stroke:0.1px currentColor;">0</div><div class="t" style="left:979.71px;top:941.85px;font-size:14px;font-weight:400;color:#3c3c3c;transform:scaleX(0.9100);-webkit-text-stroke:0.1px currentColor;">0.001</div><div class="t" style="left:1079.11px;top:941.85px;font-size:14px;font-weight:400;color:#3c3c3c;transform:scaleX(0.9100);-webkit-text-stroke:0.1px currentColor;">0.002</div><div class="t" style="left:1178.51px;top:941.85px;font-size:14px;font-weight:400;color:#3c3c3c;transform:scaleX(0.9100);-webkit-text-stroke:0.1px currentColor;">0.003</div>
</body></html>
